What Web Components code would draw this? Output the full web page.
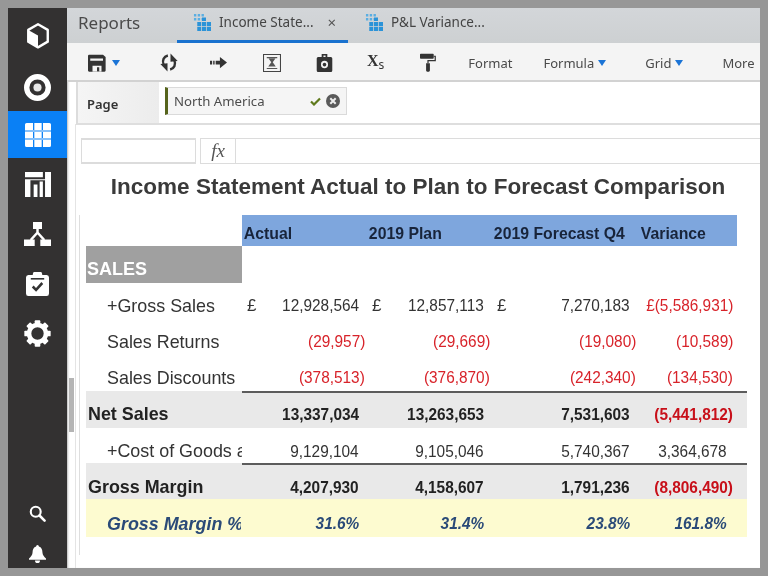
<!DOCTYPE html>
<html>
<head>
<meta charset="utf-8">
<title>Reports</title>
<style>
  html, body { margin: 0; height: 100%; }
  body { background: #979797; overflow: hidden; font-family: "Noto Sans", sans-serif; }
</style>
</head>
<body>
<app-shell>
  <side-rail slot="rail"></side-rail>
  <tab-bar slot="main"></tab-bar>
  <tool-bar slot="main"></tool-bar>
  <page-filter slot="main"></page-filter>
  <formula-bar slot="main"></formula-bar>
  <report-view slot="main"></report-view>
</app-shell>

<script>
const gearTeeth = [0, 45, 90, 135, 180, 225, 270, 315]
  .map((a) => `<rect x="9.500" y=".3" width="5" height="5.500" rx=".8" fill="#fff" transform="rotate(${a} 12 12)"/>`)
  .join("");

const syncArc = `<path fill="none" stroke="#333" stroke-width="3.200" d="M10.500 3.200C5 4.500 2.500 9.500 4.800 14.500"/><path fill="#333" d="M0.500 14l9.500-1v10.500z"/>`;

const ICONS = {
  cube: `<path d="M12 2 21 7v10.5L12 22.5 3 17.5V7z" fill="none" stroke="#fff" stroke-width="2.2" stroke-linejoin="round"/><path d="M3 7l9 5v10.5L3 17.5z" fill="#fff"/>`,
  target: `<circle cx="12" cy="12" r="9.600" fill="none" stroke="#fff" stroke-width="4.800"/><circle cx="12" cy="12" r="3.600" fill="#e8e8e8"/>`,
  grid: `<path fill="#fff" fill-rule="evenodd" d="M1.500 0h21A1.500 1.500 0 0 1 24 1.500v21a1.500 1.500 0 0 1-1.500 1.500h-21A1.500 1.500 0 0 1 0 22.500v-21A1.500 1.500 0 0 1 1.500 0zM7.400 0h1.200v24H7.400zM15.400 0h1.200v24h-1.200zM0 7.400h24v1.200H0zM0 15.400h24v1.200H0z"/>`,
  chart: `<path fill="#fff" d="M0 0h16.500v5H0zM18.500 0H24v24h-5.500zM0 7h24v1H0zM0 7h5v17H0zM8 12h3.500v12H8zM13.500 9h3v15h-3z"/>`,
  tree: `<path fill="#fff" d="M8 0h8v7H8zM0 17.500h9.500V24H0zM14.500 17.500H24V24h-9.500z"/><path fill="none" stroke="#fff" stroke-width="2.200" d="M6 18l6-7.500 6 7.500M12 6v4.500"/>`,
  clipboard: `<path fill="#fff" d="M2.500 3H7a5 5 0 0 1 10 0h4.500A2.500 2.500 0 0 1 24 5.500v16a2.500 2.500 0 0 1-2.500 2.500h-19A2.500 2.500 0 0 1 0 21.500v-16A2.500 2.500 0 0 1 2.500 3z"/><path fill="#333" d="M5 6h14v1.600H5z"/><path fill="none" stroke="#333" stroke-width="2.600" d="M7 14.500l3.500 3.500 6.500-7"/>`,
  gear: `${gearTeeth}<circle cx="12" cy="12" r="7.500" fill="none" stroke="#fff" stroke-width="4"/>`,
  search: `<circle cx="9.500" cy="9.500" r="7" fill="none" stroke="#fff" stroke-width="3"/><path d="M14.800 14.800 22 22" stroke="#fff" stroke-width="3.600" stroke-linecap="round"/>`,
  bell: `<path fill="#fff" d="M12 0a2 2 0 0 1 2 2c3.500 1 5 4 5 8 0 3 2.500 6 5 8v1.500H0V18c2.500-2 5-5 5-8 0-4 1.500-7 5-8a2 2 0 0 1 2-2zM8.500 20.500h7a3.500 3.500 0 0 1-7 0z"/>`,
  save: `<path fill="#333" fill-rule="evenodd" d="M1.500 1H20l3.500 3v18a1.500 1.500 0 0 1-1.500 1.500H1.500A1.500 1.500 0 0 1 0 22V2.500A1.500 1.500 0 0 1 1.500 1zM3 6v3h17V6zM6 15.500V24h12v-8.500zM12 17.500h3V23h-3z"/>`,
  sync: `${syncArc}<g transform="rotate(180 12 12)">${syncArc}</g>`,
  arrow: `<path fill="#333" d="M0 9h3v6H0zM4.500 9h2v6h-2zM8 9h6V3l10 9-10 9v-6H8z"/>`,
  hourglass: `<path fill="none" stroke="#444" stroke-width="1.400" d="M.7.7h22.600v22.600H.7z"/><path fill="#555" d="M5 4h14v1.500H5zM5 18.500h14V20H5zM7.500 6h9l-3.500 5 4 5.500H7l4-5.500z"/>`,
  camera: `<path fill="#333" fill-rule="evenodd" d="M8 0h8v4h5a2 2 0 0 1 2 2v16a2 2 0 0 1-2 2H3a2 2 0 0 1-2-2V6a2 2 0 0 1 2-2h5zM10.500 2v2h3V2zM12 9a5 5 0 1 0 0 10 5 5 0 0 0 0-10z"/><circle cx="12" cy="14" r="2.500" fill="#333"/>`,
  roller: `<path fill="#333" d="M1 1h16a1 1 0 0 1 1 1v5a1 1 0 0 1-1 1H1a1 1 0 0 1-1-1V2a1 1 0 0 1 1-1zM8 14h5v10a1.500 1.500 0 0 1-1.500 1.500h-2A1.500 1.500 0 0 1 8 24z"/><path fill="none" stroke="#333" stroke-width="1.600" d="M18 4.500h2v6h-9.500V14"/>`,
  sheet: `<path fill="#5aaee2" d="M1 0h2.500v2.500H1zM5 0h2.500v2.500H5zM9 0h2.500v2.500H9zM1 4h2.500v2.500H1zM5 4h2.500v2.500H5zM9 4h2.500v2.500H9z"/><path fill="#2b93d8" d="M4.500 8h4.200v4.200H4.500zM9.500 8h4.200v4.200H9.500zM9.500 3.500h4.200V7H9.500zM4.500 13h4.200v4H4.500zM9.500 13h4.200v4H9.500zM14.500 8H19v4.200h-4.500zM14.500 13H19v4h-4.500z"/>`
};

function icon(name, w, h, viewBox = "0 0 24 24") {
  return `<svg width="${w}" height="${h}" viewBox="${viewBox}" preserveAspectRatio="none" aria-hidden="true">${ICONS[name]}</svg>`;
}

const caret = `<svg width="8" height="6" viewBox="0 0 8 6" aria-hidden="true"><path d="M0 0h8L4 6z" fill="#1b74d6"/></svg>`;

class AppShell extends HTMLElement {
  constructor() {
    super();
    this.attachShadow({ mode: "open" });
    this.shadowRoot.innerHTML = `
      <style>
        :host { display: flex; position: absolute; inset: 8px; filter: blur(.35px); background: #fff; overflow: hidden; }
        .rail { display: block; flex: 0 0 59px; }
        .main { display: flex; flex-direction: column; flex: 1; min-width: 0; position: relative; box-shadow: inset 2px 0 2px -1px #bbb; }
        .splitter { position: absolute; left: 2px; top: 370px; width: 5px; height: 54px; background: #b4b4b4; }
      </style>
      <div class="rail"><slot name="rail"></slot></div>
      <div class="main"><slot name="main"></slot><div class="splitter"></div></div>
    `;
  }
}

class SideRail extends HTMLElement {
  constructor() {
    super();
    this.attachShadow({ mode: "open" });
    const item = (name, w, h, height, extra = "") =>
      `<div class="item ${extra}" style="height:${height}px">${icon(name, w, h)}</div>`;
    this.shadowRoot.innerHTML = `
      <style>
        :host { display: flex; flex-direction: column; height: 560px; background: #333131; }
        .item { display: flex; align-items: center; justify-content: center; }
        .active { background: #0a80f5; }
        .spacer { flex: 1; }
        .top { align-items: flex-start; }
      </style>
      ${item("cube", 26, 27, 55)}
      ${item("target", 27, 27, 48)}
      ${item("grid", 26, 24, 47, "active")}
      ${item("chart", 26, 25, 53)}
      ${item("tree", 27, 24, 45)}
      ${item("clipboard", 23, 24, 56)}
      ${item("gear", 27, 27, 43)}
      <div class="spacer"></div>
      ${item("search", 17, 17, 40)}
      <div style="height:12px"></div>
      ${item("bell", 17, 18, 23, "top")}
    `;
  }
}

class TabBar extends HTMLElement {
  constructor() {
    super();
    this.attachShadow({ mode: "open" });
    this.shadowRoot.innerHTML = `
      <style>
        :host { display: flex; flex: 0 0 35px; height: 35px; background: linear-gradient(#d3d6d9, #cdd0d2); color: #444; box-sizing: border-box; }
        .title { width: 110px; padding-left: 11px; box-sizing: border-box; font-size: 17px; line-height: 30px; color: #4a4a4a; }
        .tab { display: flex; align-items: center; box-sizing: border-box; height: 35px; font-size: 13.500px; padding-bottom: 4px; }
        .tab svg { margin-right: 8px; }
        .one { width: 171px; padding-left: 16px; border-bottom: 3px solid #1a72cf; }
        .two { padding-left: 17px; border-bottom: 3px solid transparent; }
        .x { margin-left: 14px; font-size: 15px; color: #555; }
      </style>
      <div class="title">Reports</div>
      <div class="tab one">${icon("sheet", 18, 17, "0 0 19 17")}<span>Income State...</span><span class="x">×</span></div>
      <div class="tab two">${icon("sheet", 18, 17, "0 0 19 17")}<span>P&amp;L Variance...</span></div>
    `;
  }
}

class ToolBar extends HTMLElement {
  constructor() {
    super();
    this.attachShadow({ mode: "open" });
    this.shadowRoot.innerHTML = `
      <style>
        :host { display: flex; align-items: center; flex: 0 0 39px; height: 39px; box-sizing: border-box; background: #f4f4f4; border-bottom: 2px solid #d2d2d2; padding: 2px 0 0 21px; font-size: 13px; color: #4a4a4a; white-space: nowrap; }
        .btn { display: inline-flex; align-items: center; gap: 4px; }
        .xs { font-family: "Liberation Serif", serif; font-weight: 700; font-size: 16px; color: #333; line-height: 1; gap: 0; margin-top: -3px; }
        .xs span { font-family: "Noto Sans", sans-serif; font-weight: 400; font-size: 12px; margin-top: 8px; }
      </style>
      <span class="btn" style="gap:6px">${icon("save", 18, 18)}${caret}</span>
      <span class="btn" style="margin-left:40px">${icon("sync", 18, 19)}</span>
      <span class="btn" style="margin-left:32px">${icon("arrow", 17, 15)}</span>
      <span class="btn" style="margin-left:36px">${icon("hourglass", 18, 18)}</span>
      <span class="btn" style="margin-left:35px">${icon("camera", 17, 18)}</span>
      <span class="btn xs" style="margin-left:34px">X<span>s</span></span>
      <span class="btn" style="margin-left:36px">${icon("roller", 16, 19, "0 0 21 26")}</span>
      <span class="btn" style="margin-left:32px">Format</span>
      <span class="btn" style="margin-left:31px">Formula ${caret}</span>
      <span class="btn" style="margin-left:39px">Grid ${caret}</span>
      <span class="btn" style="margin-left:39px">More</span>
    `;
  }
}

class PageFilter extends HTMLElement {
  constructor() {
    super();
    this.attachShadow({ mode: "open" });
    this.shadowRoot.innerHTML = `
      <style>
        :host { display: flex; flex: 0 0 43px; height: 43px; box-sizing: border-box; margin-left: 9px; background: #fff; border-left: 2px solid #dcdcdc; border-bottom: 2px solid #dedede; }
        .label { display: flex; align-items: center; width: 81px; padding: 2px 0 0 9px; box-sizing: border-box; background: linear-gradient(90deg, #f5f5f5, #ececec); font-size: 13px; font-weight: 600; color: #333; }
        .chip { display: flex; align-items: center; box-sizing: border-box; width: 182px; height: 28px; margin: 5px 0 0 6px; background: #f5f5f5; border: 1px solid #dadada; border-left: 3px solid #56641c; padding-left: 6px; font-size: 13.200px; color: #4c4c4c; }
        .chip span { flex: 1; }
        .chip svg { margin-right: 6px; }
      </style>
      <div class="label">Page</div>
      <div class="chip">
        <span>North America</span>
        <svg style="margin-right:5px" width="11" height="9" viewBox="0 0 11 9" aria-hidden="true"><path d="M1 4.500 4 7.500 10 1.500" fill="none" stroke="#5f7a1c" stroke-width="2.200"/></svg>
        <svg width="14" height="14" viewBox="0 0 14 14" aria-hidden="true"><circle cx="7" cy="7" r="7" fill="#5a5a5a"/><path d="M4.300 4.300l5.400 5.400M9.700 4.300 4.300 9.700" stroke="#eee" stroke-width="2"/></svg>
      </div>
    `;
  }
}

class FormulaBar extends HTMLElement {
  constructor() {
    super();
    this.attachShadow({ mode: "open" });
    this.shadowRoot.innerHTML = `
      <style>
        :host { display: flex; flex: 0 0 26px; height: 26px; margin: 13px 0 0 14px; box-sizing: border-box; }
        div { box-sizing: border-box; border: 1px solid #dcdcdc; background: #fff; }
        .name { width: 115px; margin-right: 4px; border-width: 2px 1px 2px 1px; }
        .fx { display: flex; align-items: center; justify-content: center; width: 36px; font-family: "Liberation Serif", serif; font-style: italic; font-size: 19px; color: #555; }
        .input { flex: 1; border-left: 0; border-right: 0; }
      </style>
      <div class="name"></div>
      <div class="fx">fx</div>
      <div class="input"></div>
    `;
  }
}

class ReportView extends HTMLElement {
  constructor() {
    super();
    this.attachShadow({ mode: "open" });
    const rows = [
      { cls: "line", h: 36, pad: 10, label: "+Gross Sales", cur: true, vals: ["12,928,564", "12,857,113", "7,270,183", "£(5,586,931)"], neg: [3] },
      { cls: "line", h: 36, pad: 10, label: "Sales Returns", vals: ["(29,957)", "(29,669)", "(19,080)", "(10,589)"], neg: [0, 1, 2, 3] },
      { cls: "line", h: 36, pad: 10, label: "Sales Discounts", vals: ["(378,513)", "(376,870)", "(242,340)", "(134,530)"], neg: [0, 1, 2, 3] },
      { cls: "total rule", h: 37, pad: 10, label: "Net Sales", vals: ["13,337,034", "13,263,653", "7,531,603", "(5,441,812)"], neg: [3] },
      { cls: "line", h: 35, pad: 12, label: "+Cost of Goods a", vals: ["9,129,104", "9,105,046", "5,740,367", "3,364,678"], neg: [] },
      { cls: "total rule", h: 36, pad: 13, label: "Gross Margin", vals: ["4,207,930", "4,158,607", "1,791,236", "(8,806,490)"], neg: [3] },
      { cls: "pct", h: 38, pad: 12, label: "Gross Margin %", vals: ["31.6%", "31.4%", "23.8%", "161.8%"], neg: [] }
    ];
    const rowHtml = rows.map((r) => `
      <div class="row ${r.cls}" style="height:${r.h}px;padding-top:${r.pad}px">
        <div class="label"><span>${r.label}</span></div>
        ${r.vals.map((v, i) => {
          const paren = v.endsWith(")");
          return `<div class="val ${paren ? "paren" : ""} ${r.neg.includes(i) ? "neg" : ""}">${r.cur && i < 3 ? '<span class="cur">£</span>' : ""}<span class="num">${v}</span></div>`;
        }).join("")}
      </div>`).join("");
    this.shadowRoot.innerHTML = `
      <style>
        :host { display: block; flex: 1; margin-left: 12px; font-family: "Liberation Sans", Arial, sans-serif; color: #333; position: relative; }
        :host::before { content: ""; position: absolute; left: -4px; top: -40px; bottom: 0; width: 1px; background: #e4e4e4; }
        :host::after { content: ""; position: absolute; left: 0; top: 51px; bottom: 13px; width: 1px; background: #dedede; }
        h1 { margin: 0 0 0 -3px; height: 46px; padding-bottom: 5px; display: flex; align-items: center; justify-content: center; font-size: 22.500px; font-weight: 700; color: #3a3a3a; white-space: nowrap; }
        .sheet { padding-left: 7px; width: 661px; }
        .row { display: grid; grid-template-columns: 156px 125px 125px 146px 97px 12px; width: 661px; align-items: center; box-sizing: border-box; }
        .head { height: 31px; }
        .head > div { background: #7ea6dd; height: 31px; box-sizing: border-box; padding-top: 6px; display: grid; grid-template-columns: 125px 125px 147px 98px; align-items: center; font-weight: 700; font-size: 17px; color: #18243a; margin-left: 156px; width: 495px; }
        .head span { display: inline-block; transform-origin: left center; transform: scaleX(.93); padding-left: 2px; white-space: nowrap; }
        .section { height: 37px; width: 156px; background: #a0a0a0; color: #fff; font-weight: 700; font-size: 18px; display: flex; align-items: flex-end; padding: 0 0 3px 1px; box-sizing: border-box; }
        .label { overflow: hidden; white-space: nowrap; font-size: 17.900px; padding-left: 21px; box-sizing: border-box; }
        .val { display: flex; justify-content: flex-end; font-size: 17px; padding-right: 8px; white-space: nowrap; position: relative; }
        .val.paren { padding-right: 2px; }
        .num { display: inline-block; transform-origin: right center; transform: scaleX(.905); }
        .cur { position: absolute; left: 5px; }
        .neg { color: #d8232a; }
        .total { background: #e9e9e9; font-weight: 700; color: #222; }
        .total .label { padding-left: 2px; }
        .total .neg { color: #c8101a; }
        .rule { position: relative; }
        .rule::before { content: ""; position: absolute; left: 156px; right: 0; top: 0; height: 2px; background: #5c5c5c; }
        .pct { background: #fdfbd0; font-weight: 700; font-style: italic; color: #2a4a78; }
        .pct .label { width: 155px; }
      </style>
      <h1>Income Statement Actual to Plan to Forecast Comparison</h1>
      <div class="sheet">
        <div class="head"><div><span>Actual</span><span>2019 Plan</span><span>2019 Forecast Q4</span><span>Variance</span></div></div>
        <div class="section">SALES</div>
        ${rowHtml}
      </div>
    `;
  }
}

customElements.define("app-shell", AppShell);
customElements.define("side-rail", SideRail);
customElements.define("tab-bar", TabBar);
customElements.define("tool-bar", ToolBar);
customElements.define("page-filter", PageFilter);
customElements.define("formula-bar", FormulaBar);
customElements.define("report-view", ReportView);
</script>
</body>
</html>
